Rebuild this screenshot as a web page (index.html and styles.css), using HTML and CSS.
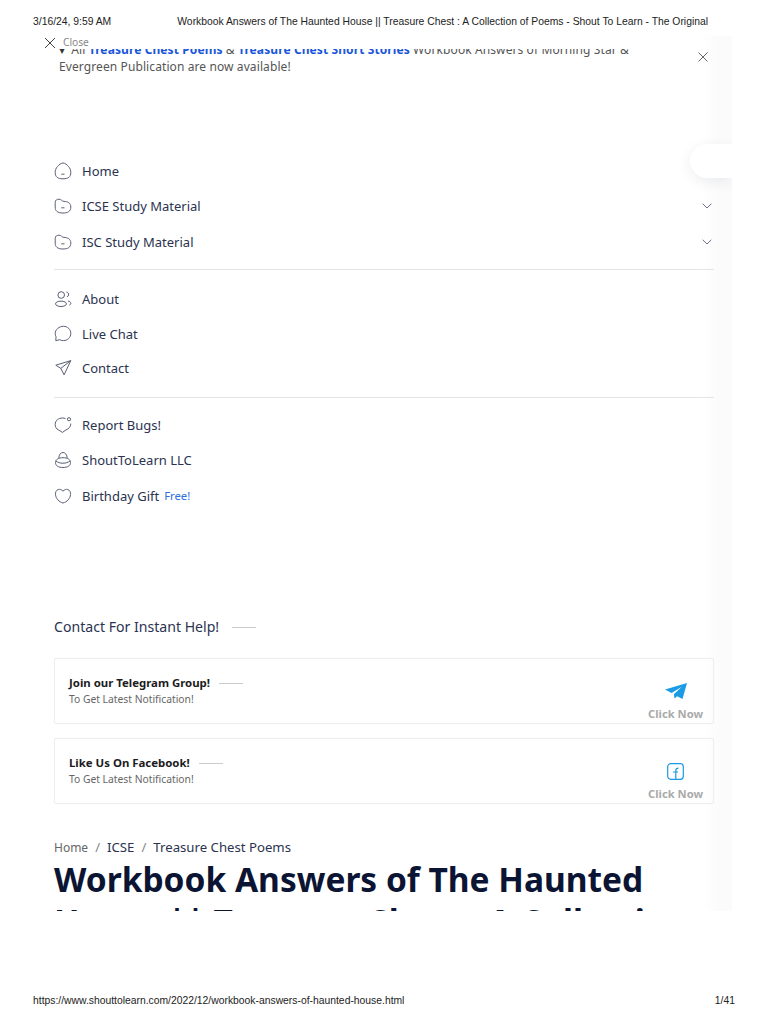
FILE: index.html
```html
<!DOCTYPE html>
<html lang="en">
<head>
    <meta charset="UTF-8">
    <title>Workbook Answers of The Haunted House</title>
    <link rel="stylesheet" href="styles.css">
</head>
<body>
    <div class="print-head">
        <span>3/16/24, 9:59 AM</span>
        <span>Workbook Answers of The Haunted House || Treasure Chest : A Collection of Poems - Shout To Learn - The Original</span>
    </div>

    <div class="sheet">
        <div class="close-bar">
            <svg class="close-icon" viewBox="0 0 12 12"><path d="M1 1l10 10M11 1L1 11"/></svg>
            <span>Close</span>
        </div>

        <div class="notice">
            <div class="notice-clip">
                <p><span class="notice-mark">▾</span> All <a href="#">Treasure Chest Poems</a> &amp; <a href="#">Treasure Chest Short Stories</a> Workbook Answers of Morning Star &amp;<br>Evergreen Publication are now available!</p>
            </div>
            <svg class="notice-x" viewBox="0 0 10 10"><path d="M.5.5l9 9M9.5.5l-9 9"/></svg>
        </div>

        <div class="side-pill"></div>

        <ul class="nav nav-first">
            <li>
                <svg class="nav-icon" viewBox="0 0 18 18"><path d="M9 1C7 1 4.800 3 3.500 4.500 2 6.200 1.200 8 1.200 10.500c0 4.500 2.500 6.300 7.800 6.300s7.800-1.800 7.800-6.300c0-2.500-.8-4.300-2.300-6C13.200 3 11 1 9 1z"/><path d="M7.300 12.200h3.200"/></svg>
                <span>Home</span>
            </li>
            <li>
                <svg class="nav-icon" viewBox="0 0 18 18"><path d="M1.200 5.500C1.200 3 3 2.200 5 2.200c2.500 0 2.500 2 5 2.200 3.800.2 6.800 1.500 6.800 5.600 0 4.500-3 6-7.800 6-5.500 0-7.800-2-7.800-6z"/><path d="M7.300 10.800h3.200"/></svg>
                <span>ICSE Study Material</span>
                <svg class="chevron" viewBox="0 0 10 6"><path d="M.7.800L5 5l4.300-4.200"/></svg>
            </li>
            <li>
                <svg class="nav-icon" viewBox="0 0 18 18"><path d="M1.200 5.500C1.200 3 3 2.200 5 2.200c2.500 0 2.500 2 5 2.200 3.800.2 6.800 1.500 6.800 5.600 0 4.500-3 6-7.800 6-5.500 0-7.800-2-7.800-6z"/><path d="M7.300 10.800h3.200"/></svg>
                <span>ISC Study Material</span>
                <svg class="chevron" viewBox="0 0 10 6"><path d="M.7.800L5 5l4.300-4.200"/></svg>
            </li>
        </ul>

        <ul class="nav nav-mid">
            <li>
                <svg class="nav-icon" viewBox="0 0 18 18"><circle cx="7.200" cy="5" r="3.300"/><ellipse cx="7" cy="13.800" rx="5.500" ry="2.700"/><path d="M12.300 2c1.800.3 2.600 1.500 2.300 3-.1.800-.7 1.500-1.500 1.800M14 11c1.700.3 2.800 1.200 2.800 2.300 0 .8-.6 1.400-1.500 1.700"/></svg>
                <span>About</span>
            </li>
            <li>
                <svg class="nav-icon" viewBox="0 0 18 18"><path d="M9.500 1.300c4 0 7.300 3 7.300 7.100s-3.300 7.200-7.300 7.200c-1.500 0-3-.4-4-.9l-3.700 1 .2-4C1.500 11 1.200 9.700 1.200 8.500c0-4 4-7.200 8.300-7.200z"/></svg>
                <span>Live Chat</span>
            </li>
            <li>
                <svg class="nav-icon" viewBox="0 0 18 18"><path d="M16.800 1.600L1.800 6.200l5 3.200 3.300 6.400zM6.800 9.400l10-7.800"/></svg>
                <span>Contact</span>
            </li>
        </ul>

        <ul class="nav nav-last">
            <li>
                <svg class="nav-icon" viewBox="0 0 18 18"><path d="M11.500 2.600C10.500 2.100 9.500 2 8.500 2 4.500 2 1.200 4.500 1.200 8.500c0 2.500 1 4.300 3.300 5.400l3.900 2.500 3.600-2.500c2.800-1.200 4.800-3 4.800-6.300"/><circle cx="15" cy="3.200" r="1.600"/></svg>
                <span>Report Bugs!</span>
            </li>
            <li>
                <svg class="nav-icon" viewBox="0 0 18 18"><path d="M4.800 7.200C4.800 3.800 6.800 1.500 9 1.500s4.200 2.300 4.200 5.700M1.500 11.500c0-3 3-4.800 7.500-4.800s7.500 1.800 7.500 4.800c0 3.300-3 5-7.500 5s-7.500-1.700-7.500-5zM1.800 10c2 1.500 4.500 2.200 7.200 2.200s5.200-.7 7.200-2.200"/></svg>
                <span>ShoutToLearn LLC</span>
            </li>
            <li>
                <svg class="nav-icon" viewBox="0 0 18 18"><path d="M9 4.200C7.500 2.500 5.800 2 4.300 2.500 2.300 3.200 1.300 5 1.500 7.500c.3 4 3.500 7.500 7.500 8.500 4-1 7.300-4.500 7.500-8.500.2-2.500-.8-4.300-2.800-5-1.500-.5-3.200 0-4.700 1.700z"/></svg>
                <span>Birthday Gift</span>
                <span class="free">Free!</span>
            </li>
        </ul>

        <h3 class="help-title">Contact For Instant Help!</h3>

        <div class="card">
            <div class="card-text">
                <div class="card-title">Join our Telegram Group!</div>
                <div class="card-sub">To Get Latest Notification!</div>
            </div>
            <div class="card-action">
                <svg class="tg-icon" viewBox="0 0 22 16"><path d="M0 6.600L22 0l-4.500 16-5.400-2.800-2.600 2.400-.6-4.400L16.500 4 6.500 10z"/></svg>
                <span>Click Now</span>
            </div>
        </div>

        <div class="card">
            <div class="card-text">
                <div class="card-title">Like Us On Facebook!</div>
                <div class="card-sub">To Get Latest Notification!</div>
            </div>
            <div class="card-action">
                <svg class="fb-icon" viewBox="0 0 17 17"><rect x=".7" y=".7" width="15.600" height="15.600" rx="3"/><path d="M8.800 16.200V7.500c0-1.500.8-2.300 2.700-2.300M6 9h5"/></svg>
                <span>Click Now</span>
            </div>
        </div>

        <div class="crumbs">
            <span class="crumb-home">Home</span>
            <span class="crumb-sep">/</span>
            <span>ICSE</span>
            <span class="crumb-sep">/</span>
            <span>Treasure Chest Poems</span>
        </div>

        <h1>Workbook Answers of The Haunted House || Treasure Chest : A Collection of Poems</h1>
    </div>

    <div class="print-foot">
        <span>https://www.shouttolearn.com/2022/12/workbook-answers-of-haunted-house.html</span>
        <span>1/41</span>
    </div>
</body>
</html>
```

FILE: styles.css
```css
body {
    margin: 0;
    background: #fff;
    font-family: 'Noto Sans', sans-serif;
    color: #2b3350;
}
.print-head, .print-foot {
    display: flex;
    justify-content: space-between;
    font-family: 'Liberation Sans', sans-serif;
    font-size: 10.35px;
    color: #222;
}
.print-head {
    height: 36px;
    padding: 16px 60px 0 33px;
    box-sizing: border-box;
    line-height: 12px;
}
.print-foot {
    margin-top: 84px;
    padding: 0 33px;
    line-height: 12px;
}
.sheet {
    position: relative;
    width: 696px;
    height: 875px;
    margin-left: 36px;
    padding: 0 18px;
    box-sizing: border-box;
    overflow: hidden;
    background: linear-gradient(to right, #fff 665px, #fbfbfc 685px);
}
.close-bar {
    display: flex;
    align-items: center;
    height: 13px;
    margin-left: -10px;
    font-size: 10.2px;
    line-height: 13px;
    color: #888;
}
.close-icon {
    width: 12px;
    height: 12px;
    margin-right: 7px;
    fill: none;
    stroke: #444;
    stroke-width: 1;
}
.notice {
    display: flex;
    justify-content: space-between;
    padding-left: 5px;
}
.notice-clip {
    height: 26px;
    overflow: hidden;
    font-size: 12px;
    color: #555;
}
.notice-clip p {
    margin: -8px 0 0;
    line-height: 17px;
    letter-spacing: .1px;
}
.notice-mark {
    margin-right: 3px;
    color: #333;
}
.notice-clip a {
    color: #1a56db;
    font-weight: 700;
    text-decoration: none;
}
.notice-x {
    width: 10px;
    height: 10px;
    margin: 3px 6px 0 0;
    fill: none;
    stroke: #555;
    stroke-width: .9;
}
.side-pill {
    position: absolute;
    right: 0;
    top: 108px;
    width: 42px;
    height: 34px;
    border-radius: 17px 0 0 17px;
    background: #fff;
    box-shadow: 0 4px 14px rgba(30,40,70,0.08);
}
.nav {
    list-style: none;
    margin: 0;
    padding: 12px 0;
    border-bottom: 1px solid #e4e4e8;
}
.nav-first {
    margin-top: 78px;
    padding: 0 0 9.4px;
}
.nav-mid {
    padding: 12px 0 11.5px;
}
.nav-last {
    border-bottom: none;
    padding: 9.5px 0 0;
}
.nav li {
    display: flex;
    align-items: center;
    height: 35.5px;
    font-size: 13px;
}
.nav-mid li {
    height: 34.5px;
}
.nav-last li {
    height: 35.3px;
}
.nav-icon {
    flex: none;
    width: 18px;
    height: 18px;
    margin-right: 10px;
    fill: none;
    stroke: #5a6074;
    stroke-width: 1;
}
.chevron {
    width: 10px;
    height: 6px;
    margin-left: auto;
    margin-right: 2px;
    fill: none;
    stroke: #6b7186;
    stroke-width: 1;
}
.free {
    margin-left: 5px;
    font-size: 11.3px;
    color: #2a6fdb;
}
.help-title {
    display: flex;
    align-items: center;
    margin: 104px 0 21px;
    font-size: 14.1px;
    font-weight: 400;
    line-height: 20px;
}
.help-title::after, .card-title::after {
    content: "";
    width: 24px;
    height: 1px;
    margin-left: 13px;
    background: #ccc;
}
.card-title::after {
    margin-left: 9px;
}
.card {
    display: flex;
    justify-content: space-between;
    height: 66px;
    margin-bottom: 14px;
    padding: 0 10px 0 14px;
    box-sizing: border-box;
    border: 1px solid #eee;
    border-radius: 2px;
    box-shadow: 0 0 2px rgba(0,0,0,0.04);
}
.card-text {
    padding-top: 16px;
}
.card-title {
    display: flex;
    align-items: center;
    font-size: 11.4px;
    font-weight: 700;
    line-height: 16px;
    color: #1c1c22;
}
.card-sub {
    font-size: 10.3px;
    line-height: 16px;
    color: #666;
}
.card-action {
    display: flex;
    flex-direction: column;
    align-items: center;
    justify-content: flex-end;
    padding-bottom: 1px;
    font-size: 11.2px;
    font-weight: 700;
    line-height: 16px;
    color: #aaa;
}
.tg-icon {
    width: 22px;
    height: 16px;
    margin-bottom: 7px;
    fill: #1b9be6;
}
.fb-icon {
    width: 17px;
    height: 17px;
    margin-bottom: 6px;
    fill: none;
    stroke: #1b9be6;
    stroke-width: 1.200;
}
.crumbs {
    display: flex;
    align-items: baseline;
    margin-top: 34px;
    font-size: 13.2px;
    line-height: 18px;
}
.crumb-home {
    font-size: 12px;
    color: #666;
}
.crumb-sep {
    margin: 0 7px;
    color: #888;
}
h1 {
    margin: 1px 0 0;
    font-size: 33.5px;
    font-weight: 700;
    line-height: 42px;
    color: #0b1533;
}
```
